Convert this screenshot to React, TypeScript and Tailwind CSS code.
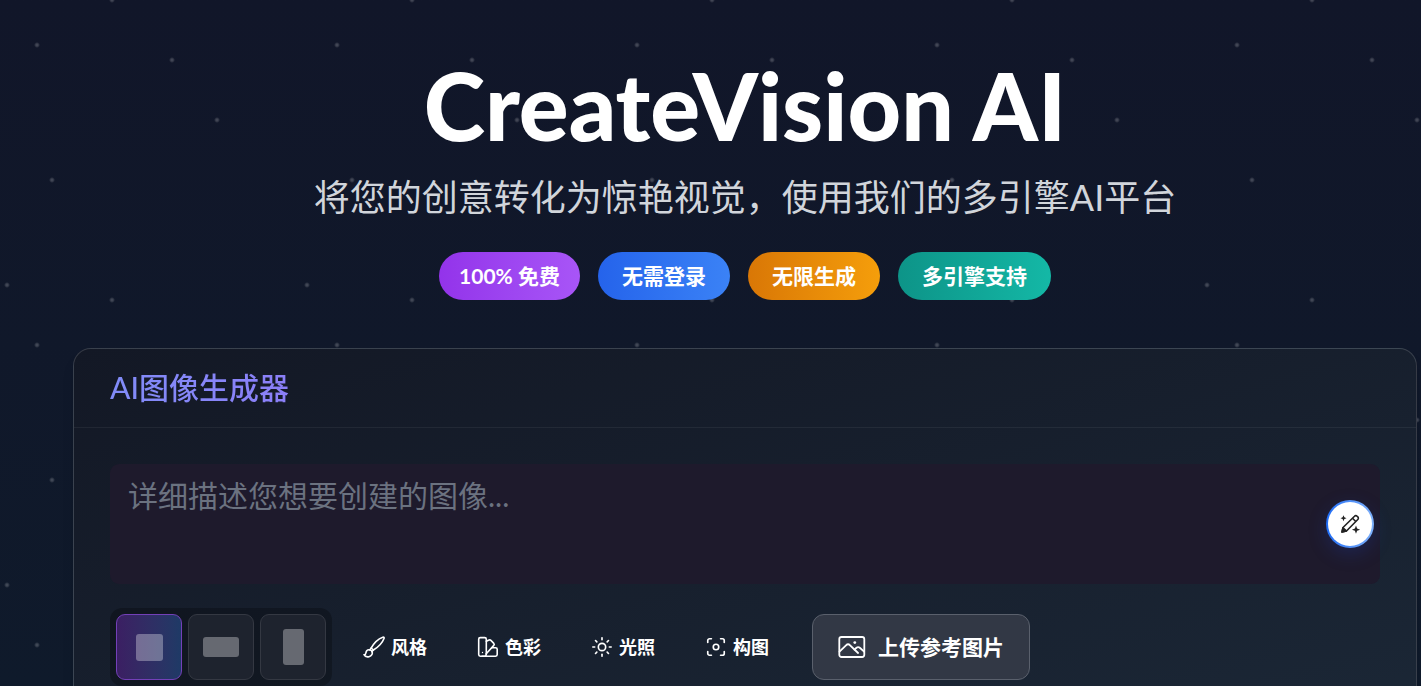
import { useState } from "react";
import { Focus, Sun } from "lucide-react";

const badges = [
  { label: "100% 免费", color: "px-5 from-[#9333ea] to-[#a855f7]" },
  { label: "无需登录", color: "px-6 from-[#2563eb] to-[#3b82f6]" },
  { label: "无限生成", color: "px-6 from-[#d97706] to-[#f59e0b]" },
  { label: "多引擎支持", color: "px-6 from-[#0d9488] to-[#14b8a6]" },
];

const ratios = [
  { id: "1:1", shape: "w-[27px] h-[27px]" },
  { id: "16:9", shape: "w-9 h-5" },
  { id: "9:16", shape: "w-[21px] h-9" },
];

const tools = [
  { label: "风格", icon: <BrushIcon /> },
  { label: "色彩", icon: <SwatchIcon /> },
  { label: "光照", icon: <Sun className="w-[22px] h-[22px]" strokeWidth={1.8} /> },
  { label: "构图", icon: <Focus className="w-[22px] h-[22px]" strokeWidth={1.8} /> },
];

export default function App() {
  const [prompt, setPrompt] = useState("");
  const [ratio, setRatio] = useState("1:1");

  return (
    <div className="relative h-screen overflow-hidden bg-linear-to-b from-[#111629] to-[#0f1a2b] font-['Lato','Noto_Sans_CJK_SC',sans-serif] text-white">
      {/* Star field */}
      <div className="absolute inset-0 pointer-events-none bg-[radial-gradient(circle_at_112px_0px,#ffffff33_1px,transparent_3px),radial-gradient(circle_at_112px_300px,#ffffff33_1px,transparent_3px),radial-gradient(circle_at_37px_45px,#ffffff33_1px,transparent_3px),radial-gradient(circle_at_172px_60px,#ffffff33_1px,transparent_3px),radial-gradient(circle_at_217px_120px,#ffffff33_1px,transparent_3px),radial-gradient(circle_at_52px_180px,#ffffff33_1px,transparent_3px),radial-gradient(circle_at_7px_285px,#ffffff33_1px,transparent_3px)] bg-size-[300px_300px]" />

      <main className="relative pt-[60px] pl-[73px] pr-1">
        {/* Hero */}
        <header className="flex flex-col items-center text-center">
          <h1 className="text-[93px] leading-[90px] font-black">CreateVision AI</h1>
          <p className="mt-5 text-[36px] leading-[54px] text-[#d1d5db]">
            将您的创意转化为惊艳视觉，使用我们的多引擎AI平台
          </p>
          <div className="mt-7 flex flex-wrap justify-center gap-[18px]">
            {badges.map((badge) => (
              <span
                key={badge.label}
                className={`flex h-12 items-center rounded-full bg-linear-to-r text-[21px] font-bold ${badge.color}`}
              >
                {badge.label}
              </span>
            ))}
          </div>
        </header>

        {/* Generator card */}
        <section className="mt-12 rounded-[18px] border border-white/15 bg-linear-to-br from-[#131825] to-[#1b2736] shadow-lg">
          <div className="border-b border-white/6 px-9 pt-[17px] pb-[19px]">
            <h2 className="inline-block bg-linear-to-r from-[#818cf8] to-[#8b7ff8] bg-clip-text text-[30px] leading-[42px] font-medium text-transparent">
              AI图像生成器
            </h2>
          </div>

          <div className="px-9 py-9">
            <div className="relative">
              <textarea
                aria-label="提示词"
                placeholder="详细描述您想要创建的图像..."
                value={prompt}
                onChange={(e) => setPrompt(e.target.value)}
                className="block h-[120px] w-full resize-none rounded-[9px] bg-[#1e1a2c] px-[18px] py-[9px] text-[30px] leading-[45px] text-white outline-none placeholder:text-[#6b7280]"
              />
              <button
                aria-label="优化提示词"
                className="absolute right-1.5 top-9 flex h-12 w-12 rounded-full bg-linear-to-r from-[#1d6bf5] to-[#7db0fb] p-0.5 shadow-[0_6px_18px_#1e40af44]"
              >
                <span className="flex h-full w-full items-center justify-center rounded-full bg-white text-[#222222]">
                  <MagicPen />
                </span>
              </button>
            </div>

            {/* Toolbar */}
            <div className="mt-6 flex items-center">
              <div className="flex gap-1.5 rounded-xl bg-black/25 p-1.5">
                {ratios.map((item) => (
                  <button
                    key={item.id}
                    aria-label={item.id}
                    onClick={() => setRatio(item.id)}
                    className={`flex h-[66px] w-[66px] items-center justify-center rounded-[9px] border ${
                      ratio === item.id
                        ? "border-[#7340b8] bg-linear-to-r from-[#3b1f63] to-[#1e3a66]"
                        : "border-[#343842] bg-[#1e232e]"
                    }`}
                  >
                    <span className={`rounded-[3px] bg-white/32 ${item.shape}`} />
                  </button>
                ))}
              </div>

              <div className="ml-3 flex">
                {tools.map((tool) => (
                  <button
                    key={tool.label}
                    className="flex h-[66px] w-[114px] items-center gap-1.5 pl-[19px] text-[18px] font-bold"
                  >
                    {tool.icon}
                    <span>{tool.label}</span>
                  </button>
                ))}
              </div>

              <button className="ml-3 flex h-[66px] items-center gap-3 rounded-xl border border-[#5a606c] bg-[#323845] px-[25px] text-[21px] font-bold">
                <PictureIcon />
                <span>上传参考图片</span>
              </button>
            </div>
          </div>
        </section>
      </main>
    </div>
  );
}

function BrushIcon() {
  return (
    <svg viewBox="0 0 22 22" className="w-[22px] h-[22px]" fill="none" stroke="currentColor" strokeWidth="1.6" strokeLinecap="round" strokeLinejoin="round">
      <path d="M8.200 12C10.500 7.800 15 3 19.800 1.200c1-.3 1.600.3 1.200 1.300C19.200 7.200 14.500 11.600 10.400 14z" />
      <path d="M8.200 12l-1.500 2M10.400 14l-1.600 1.700" />
      <path d="M9 15.500c.9 2-.3 4.600-3 5.200-2 .4-4.200-.4-5-2 1.500.2 1.700-.6 1.900-1.900.4-2.300 2-3.300 3.800-3 1.100.2 1.900.8 2.300 1.700z" />
    </svg>
  );
}

function SwatchIcon() {
  return (
    <svg viewBox="0 0 22 22" className="w-[22px] h-[22px]" fill="none" stroke="currentColor" strokeWidth="1.6" strokeLinecap="round" strokeLinejoin="round">
      <rect x="1.700" y="1.600" width="7.600" height="18.600" rx="1.600" />
      <path d="M9.300 5.200l2.800-1.200c.7-.3 1.300-.1 1.800.4l2.900 3c.6.700.6 1.400 0 2L9 18" />
      <path d="M14.800 11.800h3.800c.9 0 1.600.6 1.600 1.500v5.300c0 .9-.7 1.600-1.600 1.600H5" />
      <circle cx="5.500" cy="16.500" r=".7" fill="currentColor" stroke="none" />
    </svg>
  );
}

function PictureIcon() {
  return (
    <svg viewBox="0 0 28 24" className="w-7 h-6" fill="none" stroke="currentColor" strokeWidth="1.8" strokeLinecap="round" strokeLinejoin="round">
      <rect x="1.300" y="2" width="25" height="20" rx="2.200" />
      <path d="M1.500 16.600L8 10.300c1.400-1.300 2.800-1.300 4.100 0l8 7.700" />
      <path d="M16.500 14.600l1.700-1.600c1.300-1.100 2.600-1.100 3.900 0l4 3.600" />
      <circle cx="16.800" cy="7.600" r="1.400" fill="currentColor" stroke="none" />
    </svg>
  );
}

function MagicPen() {
  return (
    <svg viewBox="0 0 24 24" className="w-6 h-6" fill="none" stroke="currentColor" strokeWidth="1.6" strokeLinejoin="round">
      <path d="M4 20l1-4.500L16.500 4.200a1.800 1.800 0 0 1 2.600 0l.7.7a1.800 1.800 0 0 1 0 2.600L8.500 19z" />
      <path d="M14.500 6.200l3.300 3.300" />
      <path d="M4 20l1-4.200 3.300 3.100z" fill="currentColor" />
      <path d="M5.500 3.200l.9 2.100 2.100.9-2.100.9-.9 2.100-.9-2.100-2.100-.9 2.100-.9z" fill="currentColor" stroke="none" />
      <path d="M18 13.600l1.100 3 3 1.100-3 1.100-1.100 3-1.100-3-3-1.100 3-1.100z" fill="currentColor" stroke="none" />
    </svg>
  );
}
